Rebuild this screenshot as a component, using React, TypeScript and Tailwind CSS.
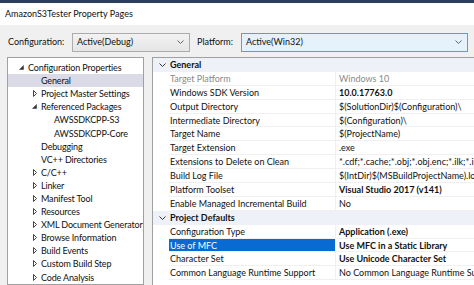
import React from "react";

const font = { fontFamily: 'Lato, "Noto Sans", sans-serif' };

type TreeItem = { label: string; level: number; arrow?: "open" | "closed"; selected?: boolean };

const tree: TreeItem[] = [
  { label: "Configuration Properties", level: 0, arrow: "open" },
  { label: "General", level: 1, selected: true },
  { label: "Project Master Settings", level: 1, arrow: "closed" },
  { label: "Referenced Packages", level: 1, arrow: "open" },
  { label: "AWSSDKCPP-S3", level: 2 },
  { label: "AWSSDKCPP-Core", level: 2 },
  { label: "Debugging", level: 1 },
  { label: "VC++ Directories", level: 1 },
  { label: "C/C++", level: 1, arrow: "closed" },
  { label: "Linker", level: 1, arrow: "closed" },
  { label: "Manifest Tool", level: 1, arrow: "closed" },
  { label: "Resources", level: 1, arrow: "closed" },
  { label: "XML Document Generator", level: 1, arrow: "closed" },
  { label: "Browse Information", level: 1, arrow: "closed" },
  { label: "Build Events", level: 1, arrow: "closed" },
  { label: "Custom Build Step", level: 1, arrow: "closed" },
  { label: "Code Analysis", level: 1, arrow: "closed" },
];

type Row =
  | { kind: "header"; label: string }
  | { kind: "prop"; label: string; value: string; bold?: boolean; gray?: boolean; selected?: boolean };

const rows: Row[] = [
  { kind: "header", label: "General" },
  { kind: "prop", label: "Target Platform", value: "Windows 10", gray: true },
  { kind: "prop", label: "Windows SDK Version", value: "10.0.17763.0", bold: true },
  { kind: "prop", label: "Output Directory", value: "$(SolutionDir)$(Configuration)\\" },
  { kind: "prop", label: "Intermediate Directory", value: "$(Configuration)\\" },
  { kind: "prop", label: "Target Name", value: "$(ProjectName)" },
  { kind: "prop", label: "Target Extension", value: ".exe" },
  { kind: "prop", label: "Extensions to Delete on Clean", value: "*.cdf;*.cache;*.obj;*.obj.enc;*.ilk;*.ipdb;*.iobj" },
  { kind: "prop", label: "Build Log File", value: "$(IntDir)$(MSBuildProjectName).log" },
  { kind: "prop", label: "Platform Toolset", value: "Visual Studio 2017 (v141)", bold: true },
  { kind: "prop", label: "Enable Managed Incremental Build", value: "No" },
  { kind: "header", label: "Project Defaults" },
  { kind: "prop", label: "Configuration Type", value: "Application (.exe)", bold: true },
  { kind: "prop", label: "Use of MFC", value: "Use MFC in a Static Library", bold: true, selected: true },
  { kind: "prop", label: "Character Set", value: "Use Unicode Character Set", bold: true },
  { kind: "prop", label: "Common Language Runtime Support", value: "No Common Language Runtime Support" },
];

function OpenArrow() {
  return (
    <svg width="5" height="5" viewBox="0 0 5 5" className="shrink-0">
      <path d="M4.5 0.5 L4.5 4.5 L0.5 4.5 Z" fill="#333" stroke="#333" strokeWidth="0.5" />
    </svg>
  );
}
function ClosedArrow() {
  return (
    <svg width="4" height="7" viewBox="0 0 4 7" className="shrink-0">
      <path d="M0.5 0.5 L3.5 3.5 L0.5 6.5 Z" fill="none" stroke="#444" strokeWidth="1" />
    </svg>
  );
}
function Chevron({ color = "#666" }: { color?: string }) {
  return (
    <svg width="7" height="4" viewBox="0 0 7 4">
      <path d="M0.5 0.5 L3.5 3.5 L6.5 0.5" fill="none" stroke={color} strokeWidth="1" />
    </svg>
  );
}

export default function App() {
  return (
    <div className="w-[474px] h-[285px] overflow-hidden flex flex-col bg-white text-[9px] text-[#111]" style={font}>
      <div className="h-[3px] bg-[#2d3e5c] shrink-0" />
      <div className="h-[22px] shrink-0 flex items-center pl-[5px] bg-white text-[9px] text-[#111]">
        AmazonS3Tester Property Pages
      </div>
      <div className="flex-1 bg-[#f0f0f0] flex flex-col min-h-0">
        <div className="h-[32px] shrink-0 flex items-center pt-[2px] text-[9px]">
          <span className="ml-[8px] w-[64px]">Configuration:</span>
          <div className="w-[118px] h-[19px] border border-[#acacac] bg-gradient-to-b from-[#f2f2f2] to-[#e6e6e6] flex items-center justify-between pl-[4px] pr-[5px]">
            <span>Active(Debug)</span>
            <Chevron />
          </div>
          <span className="ml-[7px] w-[44px]">Platform:</span>
          <div className="w-[227px] h-[19px] border border-[#569de5] bg-[#e5f1fb] flex items-center justify-between pl-[4px] pr-[5px]">
            <span>Active(Win32)</span>
            <Chevron />
          </div>
        </div>
        <div className="flex flex-1 min-h-0">
          <div className="ml-[7px] w-[137px] border border-[#a0a0a0] bg-white pt-[3px] overflow-hidden">
            {tree.map((t, i) => (
              <div
                key={i}
                className={`h-[13.1px] flex items-center leading-none ${t.selected ? "bg-[#dadbe7]" : ""}`}
              >
                <div
                  className="flex items-center justify-end w-[8px] shrink-0"
                  style={{ marginLeft: 8 + t.level * 13 }}
                >
                  {t.arrow === "open" ? <OpenArrow /> : t.arrow === "closed" ? <ClosedArrow /> : null}
                </div>
                <span className="ml-[4px] whitespace-nowrap tracking-[-0.15px]">{t.label}</span>
              </div>
            ))}
          </div>
          <div className="ml-[8px] flex-1 border-l border-t border-[#a0a0a0] bg-white overflow-hidden">
            {rows.map((r, i) =>
              r.kind === "header" ? (
                <div key={i} className="h-[13.9px] flex items-center bg-[#eef2f8] leading-none">
                  <div className="w-[17px] flex justify-center pl-[2px]">
                    <Chevron color="#333" />
                  </div>
                  <span className="font-bold">{r.label}</span>
                </div>
              ) : (
                <div key={i} className="h-[13.9px] flex leading-none">
                  <div className="w-[16px] shrink-0" />
                  <div
                    className={`w-[167px] shrink-0 flex items-center pl-[1px] border-b border-r border-[#f0f0f0] whitespace-nowrap overflow-hidden ${
                      r.selected ? "bg-[#0a6ad4] text-white" : r.gray ? "text-[#8a8a8a]" : ""
                    }`}
                  >
                    {r.label}
                  </div>
                  <div
                    className={`flex-1 flex items-center pl-[3px] border-b border-[#f0f0f0] whitespace-nowrap overflow-hidden ${
                      r.bold ? "font-bold" : ""
                    } ${r.gray ? "text-[#8a8a8a]" : ""}`}
                  >
                    {r.value}
                  </div>
                </div>
              )
            )}
          </div>
        </div>
      </div>
    </div>
  );
}
